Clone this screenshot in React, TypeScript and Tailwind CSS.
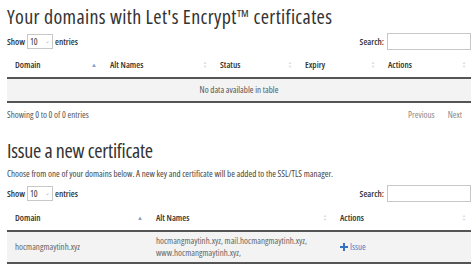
import React from 'react';

const font = { fontFamily: '"Open Sans", "Liberation Sans", sans-serif' };

const SortIcon: React.FC<{ active?: boolean }> = ({ active }) =>
  active ? (
    <span className="absolute right-[5px] top-1/2 -translate-y-1/2 text-[6px] leading-none text-[#8a9ac6]">▲</span>
  ) : (
    <span className="absolute right-[5px] top-1/2 -translate-y-1/2 flex flex-col text-[4px] leading-[4px] text-[#dadada]">
      <span>▲</span>
      <span>▼</span>
    </span>
  );

const Th: React.FC<{ label: string; width: string; active?: boolean }> = ({ label, width, active }) => (
  <th className={`relative ${width} px-2 text-left font-semibold text-[#333]`}>
    {label}
    <SortIcon active={active} />
  </th>
);

const Controls: React.FC<{ className?: string }> = ({ className }) => (
  <div className={`flex items-center justify-between text-[9px] font-semibold text-[#333] ${className ?? ''}`}>
    <div className="flex items-center gap-[2px]">
      <span>Show</span>
      <div className="flex h-[15px] w-[26px] items-center justify-between border border-[#c8c8c8] bg-white px-[2px] font-normal">
        <span>10</span>
        <span className="text-[6px] text-[#aaa]">⌄</span>
      </div>
      <span>entries</span>
    </div>
    <div className="flex items-center gap-[3px]">
      <span>Search:</span>
      <div className="h-[17px] w-[84px] border border-[#c8c8c8] bg-white" />
    </div>
  </div>
);

export default function App() {
  return (
    <div className="h-[270px] w-[474px] overflow-hidden bg-white pl-[7px] pr-[3px] [font-stretch:75%]" style={font}>
      <h1 className="pt-[3px] text-[20px] leading-[27px] tracking-[0.35px] text-[#333]">Your domains with Let's Encrypt™ certificates</h1>

      <Controls className="mt-[3px]" />

      <table className="mt-[2px] w-full table-fixed border-collapse text-[9px]">
        <thead>
          <tr className="h-[26px] border-b-2 border-[#555]">
            <Th label="Domain" width="w-[95px]" active />
            <Th label="Alt Names" width="w-[110px]" />
            <Th label="Status" width="w-[85px]" />
            <Th label="Expiry" width="w-[83px]" />
            <Th label="Actions" width="w-[91px]" />
          </tr>
        </thead>
        <tbody>
          <tr className="h-[24px] border-b-2 border-[#555] bg-[#f3f3f3]">
            <td colSpan={5} className="text-center text-[#555]">No data available in table</td>
          </tr>
        </tbody>
      </table>

      <div className="mt-[5px] flex items-center justify-between text-[9px] text-[#555]">
        <span>Showing 0 to 0 of 0 entries</span>
        <div className="flex gap-[13px] pr-[9px] text-[#888]">
          <span>Previous</span>
          <span>Next</span>
        </div>
      </div>

      <h2 className="mt-[15px] text-[20px] leading-[27px] tracking-[-0.25px] text-[#333]">Issue a new certificate</h2>
      <p className="mt-[3px] text-[9px] text-[#444]">Choose from one of your domains below. A new key and certificate will be added to the SSL/TLS manager.</p>

      <Controls className="mt-[5px]" />

      <table className="mt-[3px] w-full table-fixed border-collapse text-[9px]">
        <thead>
          <tr className="h-[26px] border-b-2 border-[#555]">
            <Th label="Domain" width="w-[141px]" active />
            <Th label="Alt Names" width="w-[184px]" />
            <Th label="Actions" width="w-[139px]" />
          </tr>
        </thead>
        <tbody>
          <tr className="h-[32px] border-b-2 border-[#555] bg-[#f3f3f3] text-[#666]">
            <td className="px-2">hocmangmaytinh.xyz</td>
            <td className="px-2 leading-[12px]">
              hocmangmaytinh.xyz, mail.hocmangmaytinh.xyz,
              <br />
              www.hocmangmaytinh.xyz,
            </td>
            <td className="px-2">
              <span className="flex items-center gap-[2px] text-[#4a83c6]">
                <svg width="8" height="8" viewBox="0 0 8 8">
                  <path d="M3 0h2v3h3v2H5v3H3V5H0V3h3z" fill="#3473c2" />
                </svg>
                Issue
              </span>
            </td>
          </tr>
        </tbody>
      </table>
    </div>
  );
}
